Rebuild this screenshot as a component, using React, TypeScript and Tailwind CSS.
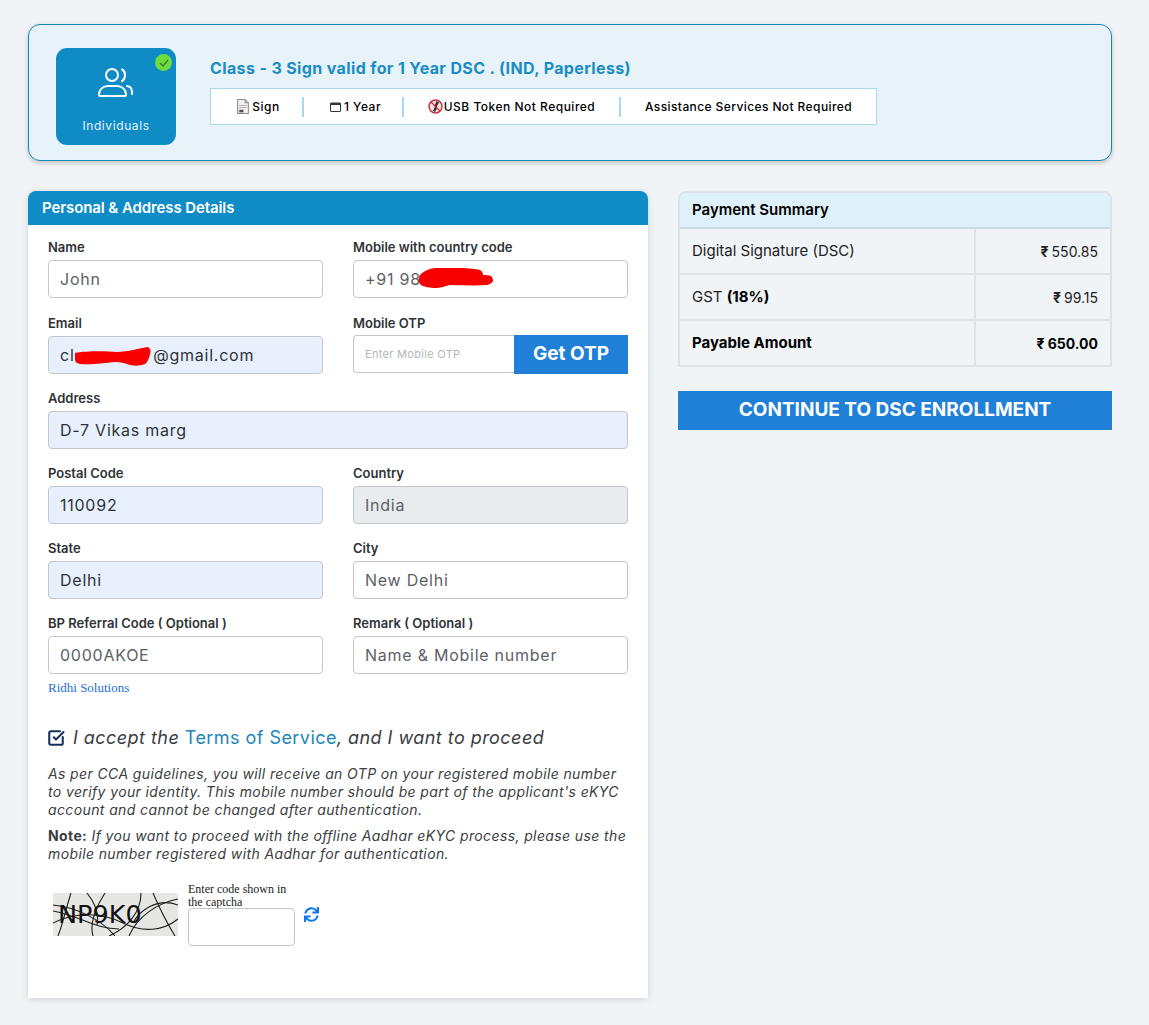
import React from "react";
import { FaSync } from "react-icons/fa";
import { SquareCheckBig } from "lucide-react";

const inputBase =
  "h-[38px] w-full rounded-[4px] border border-[#c4c7ca] px-[11px] text-[16px] tracking-[0.75px] outline-none";

function Field({
  label,
  value,
  placeholder,
  variant = "plain",
  children,
}: {
  label: string;
  value?: string;
  placeholder?: string;
  variant?: "plain" | "filled" | "disabled";
  children?: React.ReactNode;
}) {
  const tone =
    variant === "filled"
      ? "bg-[#e8f0fe] text-[#2f3336]"
      : variant === "disabled"
        ? "bg-[#e9ecef] text-[#5c6166]"
        : "bg-white text-[#5c6166]";

  return (
    <div className="mb-[16px]">
      <label className="mb-[5px] block text-[13px] font-semibold leading-[16px] text-[#2f3336]">
        {label}
      </label>
      {children ?? (
        <input
          className={`${inputBase} ${tone} placeholder:text-[#5c6166]`}
          defaultValue={value}
          placeholder={placeholder}
        />
      )}
    </div>
  );
}

function UsersIcon() {
  return (
    <svg width="36" height="32" viewBox="0 0 36 32" fill="none" stroke="white" strokeWidth="2" strokeLinecap="round" strokeLinejoin="round">
      <circle cx="14" cy="8" r="6" />
      <path d="M24 2.500c2 1 3 3.200 3 5.700s-1 4.800-3 6" />
      <path d="M2.500 29c-1 0-1.500-.5-1.500-1.500 0-5 4-8.500 9-8.500h9c5 0 9 3.500 9 8.500 0 1-.5 1.500-1.500 1.500z" />
      <path d="M29 19c3 .5 5 3 5 6v2" />
    </svg>
  );
}

function DocIcon() {
  return (
    <svg width="12" height="15" viewBox="0 0 11 14" className="shrink-0">
      <path d="M.5.500h7l3 3v10h-10z" fill="#f3f3f3" stroke="#8a8a8a" />
      <path d="M7.500.500v3h3" fill="#d8d8d8" stroke="#8a8a8a" />
      <path d="M2 6h7M2 8h7" stroke="#b0b0b0" />
      <rect x="2" y="10" width="4" height="2.500" fill="#555" />
    </svg>
  );
}

function CalendarIcon() {
  return (
    <svg width="11" height="10" viewBox="0 0 11 10" fill="none" className="shrink-0">
      <rect x=".5" y="1" width="10" height="8.500" stroke="#333" rx=".5" />
      <rect x=".5" y="1" width="10" height="2" fill="#333" />
    </svg>
  );
}

function NoUsbIcon() {
  return (
    <svg width="15" height="15" viewBox="0 0 15 15" fill="none" className="shrink-0">
      <circle cx="7.500" cy="7.500" r="6.500" fill="#f8e6e6" />
      <path d="M8.500 2l2.500 1.500-2 3.500v2.500l-2 3.500-2-1.200 1.500-3 .5-3z" fill="#333" />
      <circle cx="7.500" cy="7.500" r="6.500" stroke="#c8353f" strokeWidth="1.500" />
      <path d="M3 3l9 9" stroke="#c8353f" strokeWidth="1.300" />
    </svg>
  );
}

function Captcha() {
  return (
    <div className="relative h-[43px] w-[125px] overflow-hidden bg-[#e6e6e4]">
      <svg width="125" height="43" viewBox="0 0 125 43" fill="none" stroke="#1c1c1c" strokeWidth="1.100" className="absolute left-0 top-0">
        <path d="M0 12C22 14 48 26 62 43" />
        <path d="M18 0C14 12 10 30 5 43" />
        <path d="M34 0C42 10 46 22 44 32" />
        <path d="M52 0C44 12 36 30 40 43" />
        <path d="M88 0C88 18 76 34 56 43" />
        <path d="M100 0C106 14 114 30 122 43" />
        <path d="M125 6C104 10 84 24 76 43" />
        <path d="M0 30C24 18 50 20 70 30S110 38 125 26" />
        <path d="M125 12C104 4 86 18 80 30" />
        <path d="M0 18C30 24 42 36 66 36" />
      </svg>
      <span className="absolute left-[5px] top-[5px] font-['DejaVu_Sans',sans-serif] text-[25.5px] leading-[33px] text-[#111]">
        NP9K0
      </span>
    </div>
  );
}

export default function App() {
  return (
    <div className="min-h-[1025px] bg-[#f0f4f7] pb-[27px] pl-7 pt-6 font-['Inter',sans-serif]">
      <div className="w-[1084px]">
        <div className="flex h-[137px] items-start rounded-xl border border-[#1a86b8] bg-[#e8f2f9] pl-[27px] pt-[23px] shadow-[0_2px_5px_rgba(0,0,0,0.2)]">
          <div className="relative flex h-[97px] w-[120px] shrink-0 flex-col items-center rounded-[11px] bg-[#0f8bc6] pt-[19px] text-white">
            <UsersIcon />
            <span className="mt-[19px] text-[12px] leading-[16px] tracking-[0.6px] text-[#e4f2f9]">Individuals</span>
            <span className="absolute right-[4px] top-[6px] flex h-[17px] w-[17px] items-center justify-center rounded-full bg-[#6fdc3c]">
              <svg width="10" height="8" viewBox="0 0 10 8" fill="none" stroke="#2d7a3c" strokeWidth="1.300">
                <path d="M1 4l3 3 5-6" />
              </svg>
            </span>
          </div>
          <div className="ml-[34px] pt-[10px]">
            <h1 className="mb-[10px] text-[16px] font-bold leading-[20px] tracking-[0.37px] text-[#1a8ec4]">
              Class - 3 Sign valid for 1 Year DSC . (IND, Paperless)
            </h1>
            <div className="flex h-[37px] w-[667px] items-center border border-[#a6d8ef] bg-white text-[12px] font-medium leading-none tracking-[0.5px] text-black">
              <div className="flex h-5 w-[93px] items-center justify-center gap-[3px] border-r-2 border-[#a6d8ef] pl-[4px]">
                <DocIcon />
                Sign
              </div>
              <div className="flex h-5 w-[100px] items-center justify-center gap-[3px] border-r-2 border-[#a6d8ef] pl-[5px]">
                <CalendarIcon />
                1 Year
              </div>
              <div className="flex h-5 w-[217px] items-center justify-center gap-[1px] border-r-2 border-[#a6d8ef]">
                <NoUsbIcon />
                USB Token Not Required
              </div>
              <div className="flex h-5 flex-1 items-center justify-center tracking-[0.4px]">Assistance Services Not Required</div>
            </div>
          </div>
        </div>

        <div className="mt-[30px] flex items-start gap-[30px]">
          <div className="h-[807px] w-[620px] shrink-0 rounded-t-lg bg-white shadow-[0_1px_6px_rgba(0,0,0,0.15)]">
            <div className="flex h-[34px] items-center rounded-t-lg bg-[#0f8bc6] pl-[14px] text-[15px] font-semibold tracking-[-0.1px] text-white">
              Personal &amp; Address Details
            </div>
            <div className="px-5 pt-[14px]">
              <div className="grid grid-cols-2 gap-x-[30px] gap-y-[1px]">
                <Field label="Name" value="John" />
                <Field label="Mobile with country code">
                  <div className="relative">
                    <input className={`${inputBase} bg-white text-[#5c6166]`} defaultValue="+91 989" />
                    <svg width="75" height="20" viewBox="0 0 75 20" className="absolute left-[65px] top-[8px]">
                      <path d="M2 7C6 3 12 0 18 0C32-1 52 0 62 2C64 3 65 5 65 7C68 7 71 7 73 8C75 10 75 12 75 13C74 15 71 17 68 17C56 18 44 17 32 17C27 18 22 20 18 20C12 20 6 19 3 17C0 14 0 10 2 7Z" fill="#f80000" />
                    </svg>
                  </div>
                </Field>
                <Field label="Email">
                  <div className="relative">
                    <input className={`${inputBase} bg-[#e8f0fe] text-[#2f3336]`} defaultValue="cl               @gmail.com" />
                    <svg width="76" height="19" viewBox="0 0 76 19" className="absolute left-[27px] top-[11px]">
                      <path d="M0 6C10 4 30 4 42 5C52 5 65 1 73 0C76 2 76 5 75 7C74 12 72 16 70 17C65 19 60 19 55 18C50 16 45 15 40 15C30 16 15 18 5 17C2 16 0 15 0 13Z" fill="#f80000" />
                    </svg>
                  </div>
                </Field>
                <Field label="Mobile OTP">
                  <div className="-mt-[1px] flex">
                    <input
                      className="h-[38px] w-[161px] rounded-l-[4px] border border-r-0 border-[#c4c7ca] bg-white px-[11px] text-[11px] tracking-[0.3px] outline-none placeholder:text-[#b3b6b9]"
                      placeholder="Enter Mobile OTP"
                    />
                    <button className="h-[39px] flex-1 bg-[#2080d8] text-[19px] font-bold text-white">Get OTP</button>
                  </div>
                </Field>
              </div>
              <Field label="Address" value="D-7 Vikas marg" variant="filled" />
              <div className="grid grid-cols-2 gap-x-[30px]">
                <Field label="Postal Code" value="110092" variant="filled" />
                <Field label="Country" value="India" variant="disabled" />
                <Field label="State" value="Delhi" variant="filled" />
                <Field label="City" value="New Delhi" />
                <Field label="BP Referral Code ( Optional )" value="0000AKOE" />
                <Field label="Remark ( Optional )" placeholder="Name & Mobile number" />
              </div>

              <p className="-mt-[9px] font-['Liberation_Serif',serif] text-[13px] leading-[14px] text-[#1b6fd0]">Ridhi Solutions</p>

              <div className="mt-[31px] flex items-center gap-[8px] text-[18px] italic leading-[24px] tracking-[0.45px] text-[#3a3d40]">
                <SquareCheckBig size={18} strokeWidth={2.8} className="-ml-[1px] text-[#16325c]" />
                <span>
                  I accept the <span className="not-italic text-[#1a86b8]">Terms of Service</span>, and I want to proceed
                </span>
              </div>

              <p className="mt-[15px] text-[14px] italic leading-[18px] tracking-[0.38px] text-[#3a3d40]">
                As per CCA guidelines, you will receive an OTP on your registered mobile number to verify your identity. This
                mobile number should be part of the applicant's eKYC account and cannot be changed after authentication.
              </p>
              <p className="mt-[8px] text-[14px] italic leading-[18px] tracking-[0.38px] text-[#3a3d40]">
                <b className="not-italic">Note:</b> If you want to proceed with the offline Aadhar eKYC process, please use the
                mobile number registered with Aadhar for authentication.
              </p>

              <div className="mt-[20px] flex items-start pl-[5px]">
                <div className="mt-[10px]">
                  <Captcha />
                </div>
                <div className="ml-[10px] w-[107px]">
                  <p className="font-['Liberation_Serif',serif] text-[12px] leading-[13px] text-[#222]">
                    Enter code shown in the captcha
                  </p>
                  <input className="mt-[-1px] h-[38px] w-[107px] rounded-[4px] border border-[#c4c7ca] bg-white outline-none" />
                </div>
                <FaSync className="ml-[9px] mt-[24px] text-[15px] text-[#0d78f2]" />
              </div>
            </div>
          </div>

          <div className="flex-1">
            <div className="overflow-hidden rounded-t-lg border-2 border-[#dbe3e8] text-[15px] text-[#222]">
              <div className="flex h-[36px] items-center border-b-2 border-[#c9dbe6] bg-[#def0f9] pl-[12px] font-semibold text-black">
                Payment Summary
              </div>
              <div className="grid grid-cols-[296px_1fr]">
                <div className="flex h-[46px] items-center border-b-2 border-r-2 border-[#dde3e8] pl-[12px]">Digital Signature (DSC)</div>
                <div className="flex h-[46px] items-center justify-end border-b-2 border-[#dde3e8] pr-[12px] text-[14px]">
                  <b className="mr-[3px]">₹</b>550.85
                </div>
                <div className="flex h-[46px] items-center border-b-2 border-r-2 border-[#dde3e8] pl-[12px]">
                  GST&nbsp;<b className="text-black">(18%)</b>
                </div>
                <div className="flex h-[46px] items-center justify-end border-b-2 border-[#dde3e8] pr-[12px] text-[14px]">
                  <b className="mr-[3px]">₹</b>99.15
                </div>
                <div className="flex h-[44px] items-center border-r-2 border-[#dde3e8] pl-[12px] font-bold text-black">Payable Amount</div>
                <div className="flex h-[44px] items-center justify-end pr-[12px] text-[14px] font-bold text-black">₹ 650.00</div>
              </div>
            </div>
            <button className="mt-[24px] h-[39px] w-full bg-[#2080d8] text-[19px] font-bold uppercase text-white">
              Continue to DSC Enrollment
            </button>
          </div>
        </div>
      </div>
    </div>
  );
}
